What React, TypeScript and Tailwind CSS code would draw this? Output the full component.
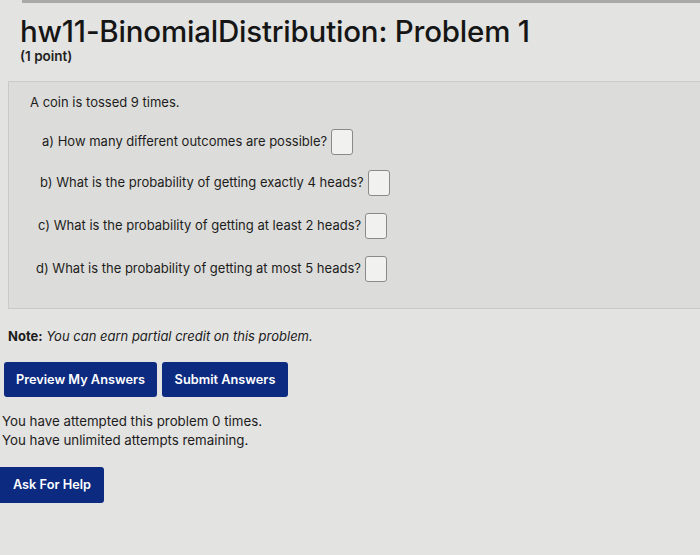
import React from "react";

const font = { fontFamily: 'Inter, "Liberation Sans", Arial, sans-serif' };

function Box() {
  return <span className="inline-block w-[22px] h-[26px] border border-[#8a8a8a] rounded-[3px] bg-[#f1f1ef] ml-[4px] align-middle" />;
}

export default function App() {
  return (
    <div className="w-[700px] h-[555px] bg-[#e3e3e1] text-[#1c1c1c] overflow-hidden relative" style={font}>
      <div className="h-[3px] ml-[22px] bg-[#a9a9a7]" />
      <div className="pl-[20px] pt-[13px]">
        <h1 className="text-[29.5px] leading-[30px] font-medium text-[#151515] tracking-[-0.2px]">hw11-BinomialDistribution: Problem 1</h1>
        <div className="text-[13.5px] font-semibold leading-[16px] mt-[2px] text-[#222]">(1 point)</div>
      </div>
      <div className="ml-[8px] mt-[17px] h-[228px] bg-[#dcdcda] border border-[#cacac8] border-r-0 pt-[12px] pl-[21px] text-[13px]">
        <div className="leading-[16px]">A coin is tossed 9 times.</div>
        <div className="pl-[12px] mt-[18px] flex items-center h-[28px]">a) How many different outcomes are possible?<Box /></div>
        <div className="pl-[10px] mt-[13px] flex items-center h-[28px]">b) What is the probability of getting exactly 4 heads?<Box /></div>
        <div className="pl-[8px] mt-[15px] flex items-center h-[28px]">c) What is the probability of getting at least 2 heads?<Box /></div>
        <div className="pl-[6px] mt-[15px] flex items-center h-[28px]">d) What is the probability of getting at most 5 heads?<Box /></div>
      </div>
      <div className="pl-[8px] mt-[18px] text-[13px] leading-[18px]">
        <span className="font-bold">Note:</span> <i>You can earn partial credit on this problem.</i>
      </div>
      <div className="flex gap-[5px] pl-[4px] mt-[17px]">
        <button className="h-[35px] w-[153px] bg-[#0b2a80] text-white font-semibold text-[12.75px] rounded-[3px]">Preview My Answers</button>
        <button className="h-[35px] w-[126px] bg-[#0b2a80] text-white font-semibold text-[12.75px] rounded-[3px]">Submit Answers</button>
      </div>
      <div className="pl-[2px] mt-[15px] text-[13.3px] leading-[19px]">
        <div>You have attempted this problem 0 times.</div>
        <div>You have unlimited attempts remaining.</div>
      </div>
      <div className="mt-[17px]">
        <button className="h-[36px] w-[104px] bg-[#0b2a80] text-white font-semibold text-[12.75px] rounded-r-[3px]">Ask For Help</button>
      </div>
    </div>
  );
}
